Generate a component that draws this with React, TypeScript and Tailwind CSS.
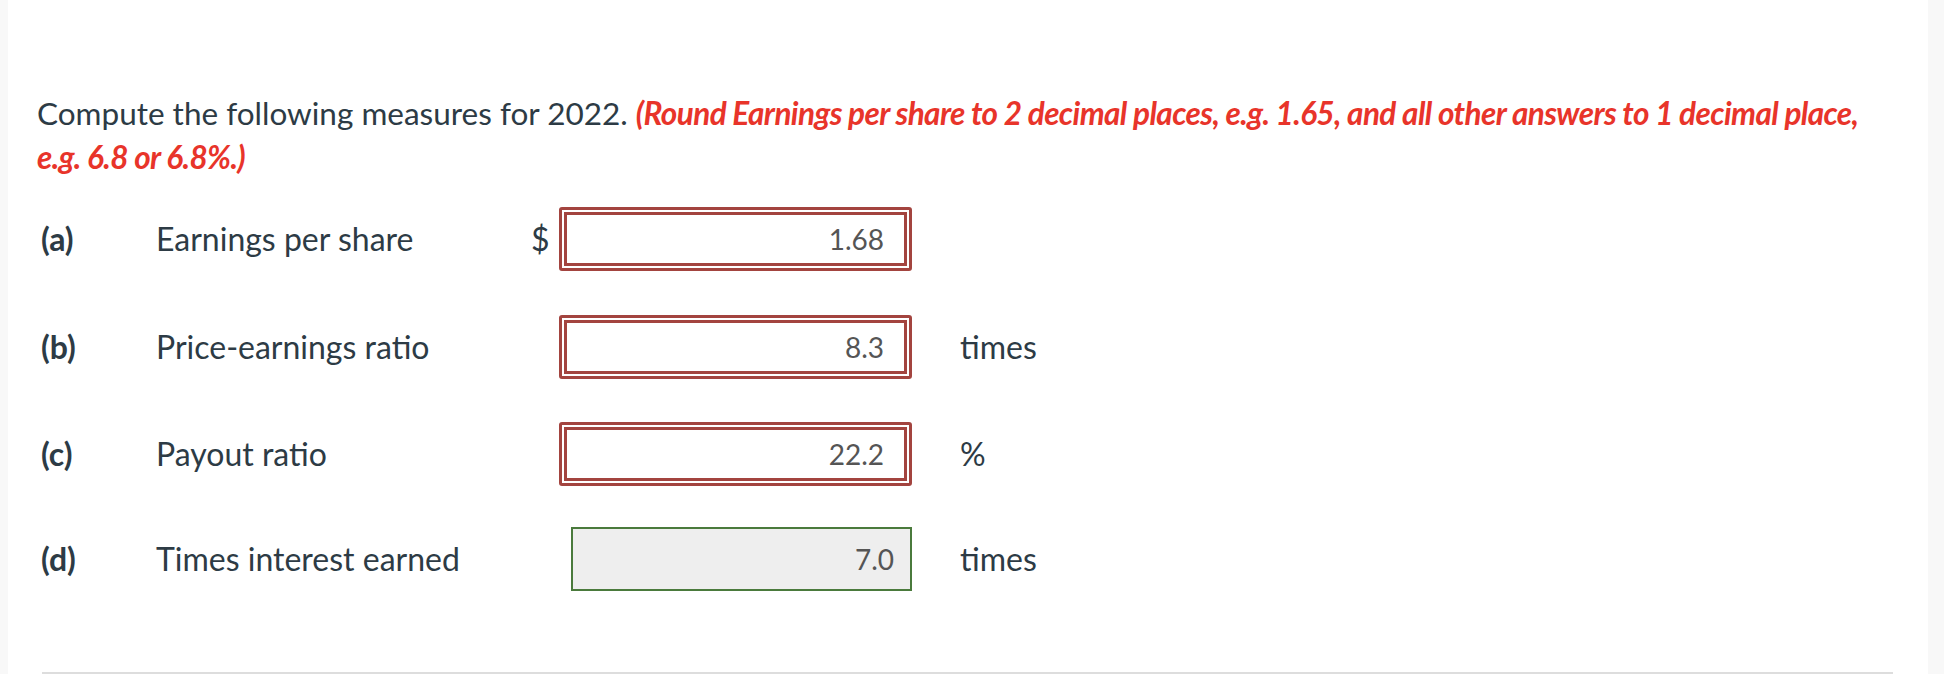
const rows = [
  { key: "(a)", label: "Earnings per share", prefix: "$", value: "1.68", unit: "", state: "wrong" },
  { key: "(b)", label: "Price-earnings ratio", prefix: "", value: "8.3", unit: "times", state: "wrong" },
  { key: "(c)", label: "Payout ratio", prefix: "", value: "22.2", unit: "%", state: "wrong" },
  { key: "(d)", label: "Times interest earned", prefix: "", value: "7.0", unit: "times", state: "right" },
];

const rowGap = ["mt-[28px]", "mt-[44px]", "mt-[43px]", "mt-[41px]"];

export default function App() {
  return (
    <div
      className="flex w-[1944px] h-[674px] overflow-hidden bg-white text-[#2d3b45]"
      style={{ fontFamily: "Lato, 'Noto Sans', sans-serif" }}
    >
      <div className="w-[8px] shrink-0 bg-[#f8f8f8]" />
      <div className="flex-1 flex flex-col pl-[31px]">
        <p className="-ml-[2px] pt-[91px] text-[31.5px] leading-[44px] pr-[20px] whitespace-nowrap">
          Compute the following measures for 2022.{" "}
          <span className="font-bold italic text-[#e8342a] tracking-[-0.6px]">
            (Round Earnings per share to 2 decimal places, e.g. 1.65, and all other answers to 1 decimal place,
            <br />
            e.g. 6.8 or 6.8%.)
          </span>
        </p>

        {rows.map((r, i) => (
          <div key={r.key} className={`flex items-center h-[64px] text-[32px] ${rowGap[i]}`}>
            <div className="w-[117px] font-bold pl-[2px]">{r.key}</div>
            <div className="w-[375px]">{r.label}</div>
            <div className="w-[28px]">{r.prefix}</div>
            {r.state === "wrong" ? (
              <div className="w-[353px] h-[64px] rounded-[3px] border-[8px] border-double border-[#a3443f] flex items-center justify-end pr-[20px] text-[28px] text-[#555]">
                {r.value}
              </div>
            ) : (
              <div className="ml-[12px] w-[341px] h-[64px] border-2 border-[#4a7a3c] bg-[#eeeeee] flex items-center justify-end pr-[16px] text-[28px] text-[#555]">
                {r.value}
              </div>
            )}
            <div className="ml-[48px]">{r.unit}</div>
          </div>
        ))}

        <div className="mt-auto ml-[3px] mr-[35px] h-[2px] bg-[#dddddd]" />
      </div>
      <div className="w-[16px] shrink-0 bg-[#f8f8f8]" />
    </div>
  );
}
